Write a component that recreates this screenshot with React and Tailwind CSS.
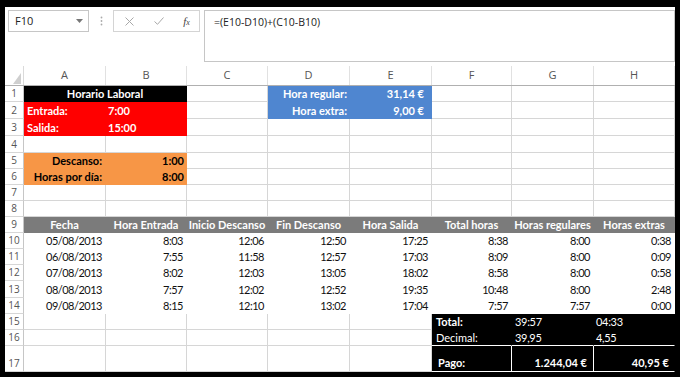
import React from "react";

const WC = ["w-[82px]", "w-[81px]", "w-[81px]", "w-[82px]", "w-[82px]", "w-[80px]", "w-[82px]", "w-[81px]"];
const HC = ["h-[16px]", "h-[17px]", "h-[17px]", "h-[17px]", "h-[16px]", "h-[16px]", "h-[16px]", "h-[16px]", "h-[16px]", "h-[16px]", "h-[16px]", "h-[16px]", "h-[17px]", "h-[16px]", "h-[16px]", "h-[16px]", "h-[26px]"];

const S = {
  grid: "bg-white border-r-[#d6d6d6] border-b-[#d6d6d6]",
  blank: "bg-white border-r-white border-b-white",
  black: "bg-black border-r-black border-b-black",
  red: "bg-[#ff0000] border-r-[#ff0000] border-b-[#ff0000]",
  orange: "bg-[#f79646] border-r-[#f79646] border-b-[#f79646]",
  blue: "bg-[#4f86d0] border-r-[#4f86d0] border-b-[#4f86d0]",
  gray: "bg-[#7b7b7b] border-r-[#7b7b7b] border-b-[#7b7b7b]",
  blackB: "bg-black border-r-black border-b-white",
  blackRB: "bg-black border-r-white border-b-white",
};

const AL = { r: "justify-end", l: "justify-start", c: "justify-center" };

function Cell({ w, s = "grid", a = "r", p = "pr-[3px]", tc = "text-black", children }) {
  return (
    <div className={`${w} h-full shrink-0 flex items-end pb-[1px] border-r border-b whitespace-nowrap ${S[s]} ${AL[a]} ${p} ${tc}`}>
      {children}
    </div>
  );
}

function Row({ i, children }) {
  return (
    <div className={`flex ${HC[i]}`}>
      <div className="w-[19px] shrink-0 h-full flex items-end justify-center pb-[1px] border-r border-b border-r-[#c6c6c6] border-b-[#d6d6d6] text-[#555] text-[10px] leading-[13px] font-['Open_Sans',sans-serif]">
        {i + 1}
      </div>
      {children}
    </div>
  );
}

function Blanks({ from, s = "grid" }) {
  return WC.slice(from).map((w, k) => <Cell key={k} w={w} s={s} />);
}

const DATA = [
  ["05/08/2013", "8:03", "12:06", "12:50", "17:25", "8:38", "8:00", "0:38"],
  ["06/08/2013", "7:55", "11:58", "12:57", "17:03", "8:09", "8:00", "0:09"],
  ["07/08/2013", "8:02", "12:03", "13:05", "18:02", "8:58", "8:00", "0:58"],
  ["08/08/2013", "7:57", "12:02", "12:52", "19:35", "10:48", "8:00", "2:48"],
  ["09/08/2013", "8:15", "12:10", "13:02", "17:04", "7:57", "7:57", "0:00"],
];

const HEAD = ["Fecha", "Hora Entrada", "Inicio Descanso", "Fin Descanso", "Hora Salida", "Total horas", "Horas regulares", "Horas extras"];

export default function App() {
  const wb = "text-white font-bold";
  const ob = "text-black font-bold";
  const num = "text-[#111] tracking-[-0.5px]";
  return (
    <div className="w-[680px] h-[377px] bg-black pt-[7px] pl-[5px] pr-[5px] pb-[5px] overflow-hidden">
      <div className="w-[670px] h-[365px] bg-white flex flex-col overflow-hidden">
        {/* formula bar */}
        <div className="h-[59px] shrink-0 flex items-start pt-[3px] pl-[3px] font-['Open_Sans',sans-serif]">
          <div className="w-[81px] h-[22px] border border-[#c6c6c6] flex items-center justify-between pl-[6px] pr-[5px] text-[11px] text-[#222]">
            <span>F10</span>
            <svg width="7" height="4" viewBox="0 0 7 4">
              <polygon points="0,0 7,0 3.5,4" fill="#777" />
            </svg>
          </div>
          <div className="w-[24px] h-[22px] flex items-center justify-center">
            <svg width="3" height="10" viewBox="0 0 3 10">
              <circle cx="1.5" cy="1.5" r="0.9" fill="#aaa" />
              <circle cx="1.5" cy="5" r="0.9" fill="#aaa" />
              <circle cx="1.5" cy="8.5" r="0.9" fill="#aaa" />
            </svg>
          </div>
          <div className="w-[87px] h-[22px] border border-[#d4d4d4] flex items-center">
            <div className="w-[30px] flex justify-center">
              <svg width="9" height="9" viewBox="0 0 9 9">
                <path d="M0.5 0.5 L8.5 8.5 M8.5 0.5 L0.5 8.5" stroke="#a8a8a8" strokeWidth="1" />
              </svg>
            </div>
            <div className="w-[30px] flex justify-center">
              <svg width="10" height="8" viewBox="0 0 10 8">
                <path d="M0.5 4.5 L3.5 7.3 L9.5 0.5" stroke="#a8a8a8" strokeWidth="1" fill="none" />
              </svg>
            </div>
            <div className="w-[25px] flex justify-center text-[#444] text-[11px] leading-none font-['Liberation_Serif',serif] italic">
              <span>f</span>
              <span className="text-[8px] self-end">x</span>
            </div>
          </div>
          <div className="ml-[4px] flex-1 h-[52px] border border-[#c6c6c6] pl-[9px] pt-[3px] text-[10.5px] leading-[16px] text-[#222]">
            =(E10-D10)+(C10-B10)
          </div>
        </div>

        {/* column headers */}
        <div className="h-[20px] shrink-0 flex border-b border-[#b0b0b0] font-['Open_Sans',sans-serif] text-[11px] text-[#555]">
          <div className="w-[19px] shrink-0 h-full flex items-end justify-end pr-[2px] pb-[1px] border-r border-[#dadada]">
            <svg width="8" height="11" viewBox="0 0 8 11">
              <polygon points="8,0 8,11 0,11" fill="#cfcfcf" />
            </svg>
          </div>
          {["A", "B", "C", "D", "E", "F", "G", "H"].map((l, k) => (
            <div key={l} className={`${WC[k]} shrink-0 h-full flex items-center justify-center border-r border-[#e1e1e1]`}>
              {l}
            </div>
          ))}
        </div>

        {/* sheet */}
        <div className="flex flex-col font-['Lato','Liberation_Sans',sans-serif] text-[11px] leading-[13px]">
          <Row i={0}>
            <Cell w="w-[163px]" s="black" a="c" p="" tc={wb}>Horario Laboral</Cell>
            <Cell w={WC[2]} />
            <Cell w={WC[3]} s="blue" p="pr-[2px]" tc={wb}>Hora regular:</Cell>
            <Cell w={WC[4]} s="blue" p="pr-[7px]" tc={wb}>31,14 €</Cell>
            <Blanks from={5} />
          </Row>
          <Row i={1}>
            <Cell w={WC[0]} s="red" a="l" p="pl-[3px]" tc={wb}>Entrada:</Cell>
            <Cell w={WC[1]} s="red" a="l" p="pl-[2px]" tc={wb}>7:00</Cell>
            <Cell w={WC[2]} />
            <Cell w={WC[3]} s="blue" p="pr-[2px]" tc={wb}>Hora extra:</Cell>
            <Cell w={WC[4]} s="blue" p="pr-[7px]" tc={wb}>9,00 €</Cell>
            <Blanks from={5} />
          </Row>
          <Row i={2}>
            <Cell w={WC[0]} s="red" a="l" p="pl-[3px]" tc={wb}>Salida:</Cell>
            <Cell w={WC[1]} s="red" a="l" p="pl-[2px]" tc={wb}>15:00</Cell>
            <Blanks from={2} />
          </Row>
          <Row i={3}>
            <Blanks from={0} />
          </Row>
          <Row i={4}>
            <Cell w={WC[0]} s="orange" tc={ob}>Descanso:</Cell>
            <Cell w={WC[1]} s="orange" p="pr-[2px]" tc={ob}>1:00</Cell>
            <Blanks from={2} />
          </Row>
          <Row i={5}>
            <Cell w={WC[0]} s="orange" tc={ob}>Horas por día:</Cell>
            <Cell w={WC[1]} s="orange" p="pr-[2px]" tc={ob}>8:00</Cell>
            <Blanks from={2} />
          </Row>
          <Row i={6}>
            <Blanks from={0} />
          </Row>
          <Row i={7}>
            <Blanks from={0} />
          </Row>
          <Row i={8}>
            {HEAD.map((h, k) => (
              <Cell key={k} w={WC[k]} s="gray" a="c" p="" tc={wb}>{h}</Cell>
            ))}
          </Row>
          {DATA.map((r, ri) => (
            <Row key={ri} i={9 + ri}>
              {r.map((v, k) => (
                <Cell key={k} w={WC[k]} s="blank" p="pr-[3px]" tc={num}>{v}</Cell>
              ))}
            </Row>
          ))}
          <Row i={14}>
            <Cell w={WC[0]} />
            <Cell w={WC[1]} />
            <Cell w={WC[2]} />
            <Cell w={WC[3]} />
            <Cell w={WC[4]} />
            <Cell w={WC[5]} s="black" a="l" p="pl-[4px]" tc={wb}>Total:</Cell>
            <Cell w={WC[6]} s="black" a="l" p="pl-[3px]" tc="text-white tracking-[-0.3px]">39:57</Cell>
            <Cell w={WC[7]} s="black" a="l" p="pl-[2px]" tc="text-white tracking-[-0.3px]">04:33</Cell>
          </Row>
          <Row i={15}>
            <Cell w={WC[0]} />
            <Cell w={WC[1]} />
            <Cell w={WC[2]} />
            <Cell w={WC[3]} />
            <Cell w={WC[4]} />
            <Cell w={WC[5]} s="blackB" a="l" p="pl-[4px]" tc="text-white">Decimal:</Cell>
            <Cell w={WC[6]} s="blackB" a="l" p="pl-[3px]" tc="text-white tracking-[-0.3px]">39,95</Cell>
            <Cell w={WC[7]} s="blackB" a="l" p="pl-[2px]" tc="text-white tracking-[-0.3px]">4,55</Cell>
          </Row>
          <Row i={16}>
            <Cell w={WC[0]} />
            <Cell w={WC[1]} />
            <Cell w={WC[2]} />
            <Cell w={WC[3]} />
            <Cell w={WC[4]} />
            <Cell w={WC[5]} s="blackRB" a="l" p="pl-[6px] pb-[2px]" tc={wb}>Pago:</Cell>
            <Cell w={WC[6]} s="blackRB" p="pr-[6px] pb-[2px]" tc={wb}>1.244,04 €</Cell>
            <Cell w={WC[7]} s="blackB" p="pr-[5px] pb-[2px]" tc={wb}>40,95 €</Cell>
          </Row>
        </div>
      </div>
    </div>
  );
}
